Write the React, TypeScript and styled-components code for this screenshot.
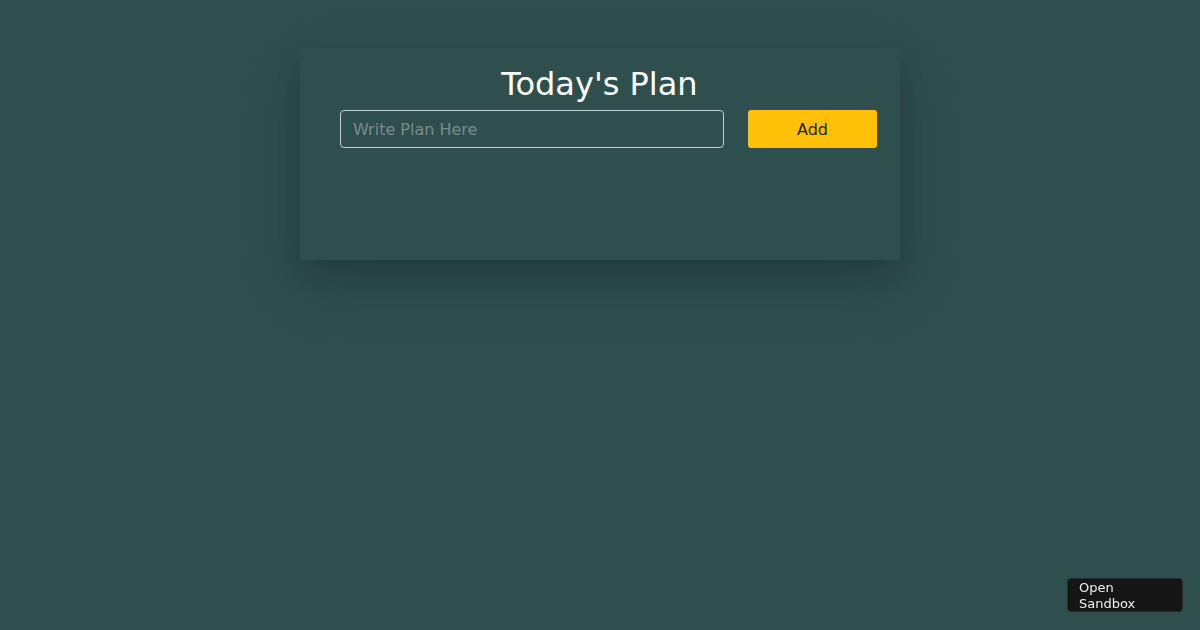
import React from 'react';
import styled, { createGlobalStyle } from 'styled-components';

const GlobalStyle = createGlobalStyle`
  html, body {
    margin: 0;
    padding: 0;
    background: #2f4f4f;
    font-family: "DejaVu Sans", sans-serif;
  }
`;

const Page = styled.div`
  min-height: 630px;
  display: flex;
  justify-content: center;
  padding-top: 48px;
  box-sizing: border-box;
`;

const Card = styled.div`
  width: 600px;
  height: 212px;
  box-sizing: border-box;
  padding: 17px 23px 0 40px;
  background: #2f4f4f;
  box-shadow: 0 24px 60px rgba(0, 0, 0, 0.16), 0 12px 24px rgba(0, 0, 0, 0.12);
  display: flex;
  flex-direction: column;
`;

const Title = styled.h1`
  margin: 0 0 7px;
  text-align: center;
  font-size: 32px;
  font-weight: 400;
  color: #fff;
  transform: translateX(-9px);
`;

const Row = styled.div`
  display: flex;
  gap: 24px;
`;

const Input = styled.input`
  width: 384px;
  height: 38px;
  box-sizing: border-box;
  padding: 0 12px;
  background: transparent;
  border: 1px solid #c8cccc;
  border-radius: 4px;
  color: #fff;
  font-family: "DejaVu Sans", sans-serif;
  font-size: 16px;
  outline: none;

  &::placeholder {
    color: #7b8a8a;
  }
`;

const AddButton = styled.button`
  width: 129px;
  height: 38px;
  border: none;
  border-radius: 3px;
  background: #ffc107;
  color: #1a1a1a;
  font-family: "DejaVu Sans", sans-serif;
  font-size: 16px;
  cursor: pointer;
`;

const SandboxLink = styled.a`
  position: fixed;
  right: 17px;
  bottom: 18px;
  width: 116px;
  height: 34px;
  box-sizing: border-box;
  padding: 1px 11px;
  background: #151515;
  border: 1px solid #2a2a2a;
  border-radius: 4px;
  color: #f0f0f0;
  font-family: "DejaVu Sans", sans-serif;
  font-size: 13px;
  line-height: 16px;
  text-decoration: none;
  word-spacing: 100px;
`;

export default function App() {
  return (
    <>
      <GlobalStyle />
      <Page>
        <Card>
          <Title>Today's Plan</Title>
          <Row>
            <Input placeholder="Write Plan Here" />
            <AddButton>Add</AddButton>
          </Row>
        </Card>
      </Page>
      <SandboxLink href="#">Open Sandbox</SandboxLink>
    </>
  );
}
